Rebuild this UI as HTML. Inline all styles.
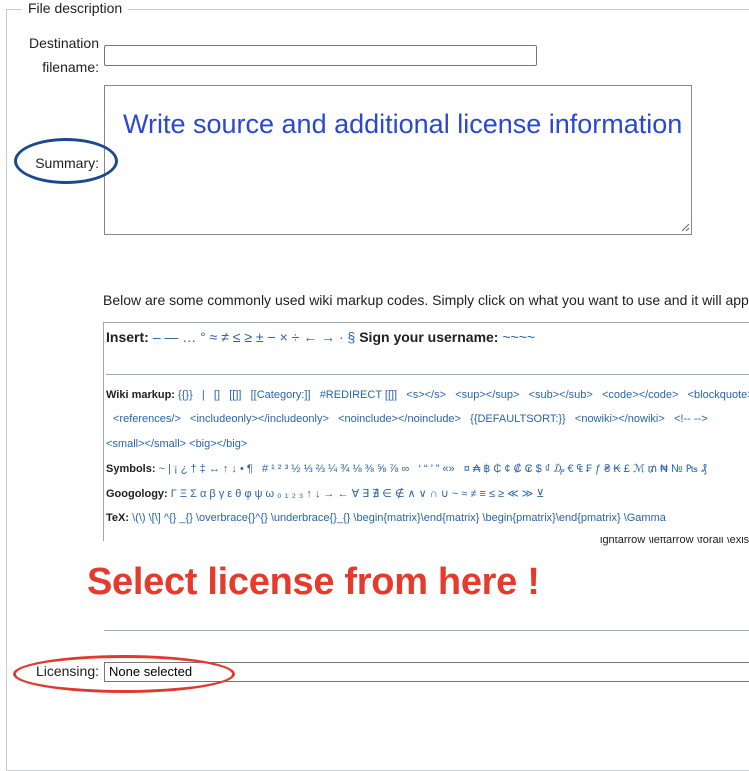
<!DOCTYPE html>
<html><head><meta charset="utf-8"><style>
body{margin:0;width:749px;height:718px;background:#fff;position:relative;overflow:hidden;font-family:"Liberation Sans","DejaVu Sans",sans-serif;color:#202122}
.a{position:absolute;white-space:nowrap}
.lbl{font-size:14px;color:#202122;text-align:right}
.l{color:#2a64a8}
.wm{font-size:11px;color:#202122}
.wm b{font-size:11px}
</style></head><body>
<div class="a" style="left:6px;top:9px;width:760px;height:760px;border:1px solid #c8ccd1;border-right:none"></div>
<div class="a" style="left:22px;top:0;background:#fff;padding:0 6px;font-size:14px;color:#202122">File description</div>

<div class="a lbl" style="left:0;width:99px;top:35px">Destination</div>
<div class="a lbl" style="left:0;width:99px;top:59px">filename:</div>
<div class="a" style="left:104px;top:45px;width:431px;height:19px;border:1px solid #767676;border-radius:2px"></div>

<div class="a" style="left:104px;top:85px;width:586px;height:148px;border:1px solid #888"></div>
<div class="a" style="left:123px;top:109px;font-size:27px;color:#2a48d0">Write source and additional license information</div>
<svg class="a" style="left:680px;top:222px" width="10" height="10"><path d="M9 2L2 9M9 6L6 9" stroke="#666" stroke-width="1"/></svg>
<div class="a lbl" style="left:0;width:99px;top:155px">Summary:</div>
<div class="a" style="left:14px;top:138px;width:104px;height:46px;border:3px solid #1a4a8e;border-radius:50%;box-sizing:border-box"></div>

<div class="a" style="left:103px;top:292px;font-size:14px;color:#202122">Below are some commonly used wiki markup codes. Simply click on what you want to use and it will appear</div>

<div class="a" style="left:103px;top:322px;width:700px;height:218px;border:1px solid #a2a9b1;border-bottom:none"></div>
<div class="a" style="left:106px;top:329px;font-size:14px"><b>Insert:</b> <span class="l">– — … ° ≈ ≠ ≤ ≥ ± − × ÷ ← → · §</span> <b>Sign your username:</b> <span class="l">~~~~</span></div>
<div class="a" style="left:106px;top:374px;width:700px;border-top:1px solid #a2a9b1"></div>
<div class="a wm" style="left:106px;top:389px"><b>Wiki markup:</b> <span class="l">{{}} &nbsp; | &nbsp; [] &nbsp; [[]] &nbsp; [[Category:]] &nbsp; #REDIRECT [[]] &nbsp; &lt;s&gt;&lt;/s&gt; &nbsp; &lt;sup&gt;&lt;/sup&gt; &nbsp; &lt;sub&gt;&lt;/sub&gt; &nbsp; &lt;code&gt;&lt;/code&gt; &nbsp; &lt;blockquote&gt;</span></div>
<div class="a wm" style="left:113px;top:413px"><span class="l">&lt;references/&gt; &nbsp; &lt;includeonly&gt;&lt;/includeonly&gt; &nbsp; &lt;noinclude&gt;&lt;/noinclude&gt; &nbsp; {{DEFAULTSORT:}} &nbsp; &lt;nowiki&gt;&lt;/nowiki&gt; &nbsp; &lt;!-- --&gt;</span></div>
<div class="a wm" style="left:106px;top:438px"><span class="l">&lt;small&gt;&lt;/small&gt; &lt;big&gt;&lt;/big&gt;</span></div>
<div class="a wm" style="left:106px;top:462px"><b>Symbols:</b> <span class="l">~ | ¡ ¿ † ‡ ↔ ↑ ↓ • ¶ &nbsp; # ¹ ² ³ ½ ⅓ ⅔ ¼ ¾ ⅛ ⅜ ⅝ ⅞ ∞ &nbsp; ‘ “ ’ ” «» &nbsp; ¤ ₳ ฿ ₵ ¢ ₡ ₢ $ ₫ ₯ € ₠ ₣ ƒ ₴ ₭ £ ℳ ₥ ₦ № ₧ ₰</span></div>
<div class="a wm" style="left:106px;top:487px"><b>Googology:</b> <span class="l">Γ Ξ Σ α β γ ε θ φ ψ ω ₀ ₁ ₂ ₃ ↑ ↓ → ← ∀ ∃ ∄ ∈ ∉ ∧ ∨ ∩ ∪ ~ ≈ ≠ ≡ ≤ ≥ ≪ ≫ ⊻</span></div>
<div class="a wm" style="left:106px;top:512px"><b>TeX:</b> <span class="l">\(\) \[\] ^{} _{} \overbrace{}^{} \underbrace{}_{} \begin{matrix}\end{matrix} \begin{pmatrix}\end{pmatrix} \Gamma</span></div>
<div class="a" style="left:600px;top:537px;width:160px;height:13px;overflow:hidden"><div class="wm l" style="position:absolute;top:-3px;left:0;white-space:nowrap">ightarrow \leftarrow \forall \exists</div></div>

<div class="a" style="left:87px;top:561px;font-size:38px;font-weight:bold;color:#e63a2c;letter-spacing:-0.3px">Select license from here !</div>
<div class="a" style="left:104px;top:630px;width:650px;border-top:1px solid #a2a9b1"></div>

<div class="a lbl" style="left:0;width:99px;top:663px">Licensing:</div>
<div class="a" style="left:104px;top:662px;width:660px;height:18px;border:1px solid #767676;font-size:13px;line-height:18px;padding-left:4px;color:#000">None selected</div>
<div class="a" style="left:13px;top:655px;width:222px;height:38px;border:3px solid #e0392e;border-radius:50%;box-sizing:border-box"></div>
</body></html>
